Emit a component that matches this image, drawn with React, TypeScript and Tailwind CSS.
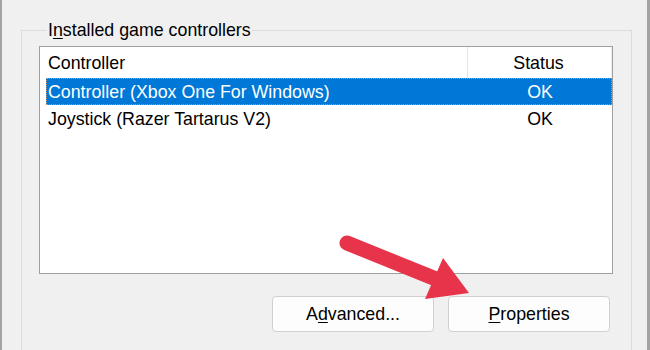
import React from "react";

const font = { fontFamily: '"Liberation Sans", Arial, sans-serif' };

export default function App() {
  return (
    <div
      className="relative flex h-[350px] w-[650px] overflow-hidden bg-[#f0f0f0] text-[17.8px] leading-[20px] text-[#000]"
      style={font}
    >
      <div className="w-[2px] shrink-0 bg-[#a3a3a3]" />
      <div className="flex flex-1 pl-[19px] pr-[15px] pt-[20px]">
        <fieldset className="flex h-[400px] flex-1 flex-col border border-[#dcdcdc] pl-[17px] pr-[18px]">
          <legend className="ml-[8px] px-[1px]">
            I<span className="underline underline-offset-[2px]">n</span>stalled game controllers
          </legend>
          <div className="mt-[6px] flex h-[228px] w-[574px] flex-col border border-[#a0a0a0] bg-white">
            <div className="flex h-[31px] shrink-0 items-center">
              <div className="flex h-full w-[428px] items-center border-r border-[#e5e5e5] pl-[8px]">
                Controller
              </div>
              <div className="flex h-full flex-1 items-center justify-center border-r border-[#ececec] pr-[2px]">
                Status
              </div>
            </div>
            <div className="ml-[6px] flex h-[27px] items-center bg-[#0078d7] text-white outline-1 outline-dotted outline-offset-[-1px] outline-[#d09060]">
              <div className="w-[422px] pl-[2px]">Controller (Xbox One For Windows)</div>
              <div className="flex-1 text-center">OK</div>
            </div>
            <div className="ml-[6px] flex h-[27px] items-center">
              <div className="w-[422px] pl-[2px]">Joystick (Razer Tartarus V2)</div>
              <div className="flex-1 text-center">OK</div>
            </div>
          </div>
          <div className="mt-[22px] flex w-[574px] justify-end gap-[14px] pr-[3px]">
            <button className="flex h-[36px] w-[162px] items-center justify-center rounded-[4px] border border-[#d0d0d0] bg-[#fdfdfd]">
              A<span className="underline underline-offset-[2px]">d</span>vanced...
            </button>
            <button className="flex h-[36px] w-[162px] items-center justify-center rounded-[4px] border border-[#d0d0d0] bg-[#fdfdfd]">
              <span className="underline underline-offset-[2px]">P</span>roperties
            </button>
          </div>
        </fieldset>
      </div>
      <div className="w-[4px] shrink-0 bg-[#a3a3a3]" />
      <svg className="pointer-events-none absolute left-0 top-0" width="650" height="350" viewBox="0 0 650 350">
        <line x1="347" y1="243" x2="436" y2="279" stroke="#e8344a" strokeWidth="15" strokeLinecap="round" />
        <polygon points="443,258 425,299 469,293" fill="#e8344a" />
      </svg>
    </div>
  );
}
